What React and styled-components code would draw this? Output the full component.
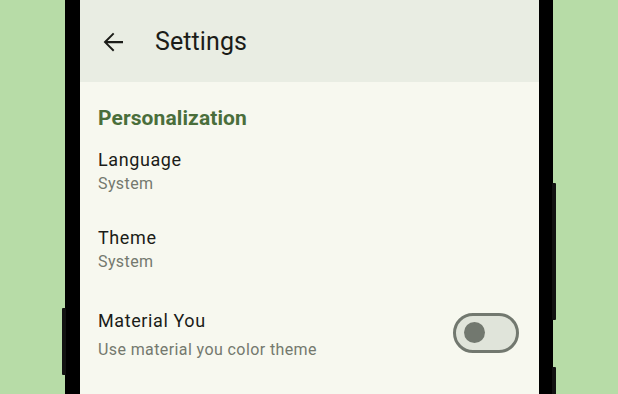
import React from "react";
import styled, { createGlobalStyle } from "styled-components";

const Global = createGlobalStyle`
  html, body { margin: 0; padding: 0; }
  body {
    background: #b7dca7;
    font-family: Roboto, "Noto Sans", Arial, sans-serif;
    overflow: hidden;
  }
`;

const Page = styled.div`
  height: 394px;
  display: flex;
  align-items: stretch;
  padding-left: 65px;
  overflow: hidden;
`;

const Phone = styled.div`
  position: relative;
  width: 459px;
  height: 394px;
  background: #000;
  padding: 0 14px 0 15px;
  display: flex;
`;

const SideButton = styled.div`
  position: absolute;
  top: ${(p) => p.$top}px;
  height: ${(p) => p.$h}px;
  width: 4px;
  background: #111;
  border-radius: 1px;
  ${(p) => (p.$side === "left" ? "left: -3px;" : "right: -3px;")}
`;

const Screen = styled.div`
  flex: 1;
  background: #f7f8ef;
  display: flex;
  flex-direction: column;
`;

const TopBar = styled.header`
  height: 82px;
  background: #e9ede3;
  display: flex;
  align-items: center;
  padding-left: 18px;
`;

const BackButton = styled.button`
  border: 0;
  background: none;
  padding: 0;
  width: 30px;
  height: 30px;
  display: flex;
  color: #1b1c18;
  margin-right: 27px;
  margin-top: 1px;
`;

const Title = styled.h1`
  margin: 0;
  font-size: 25px;
  line-height: 25px;
  font-weight: 400;
  color: #1b1c18;
  letter-spacing: 0.1px;
`;

const Content = styled.main`
  padding: 24px 18px 0 18px;
  display: flex;
  flex-direction: column;
`;

const SectionHeading = styled.h2`
  margin: 0 0 2.5px;
  font-size: 21px;
  line-height: 24px;
  font-weight: 700;
  color: #4a6e3b;
  letter-spacing: 0.1px;
`;

const Row = styled.div`
  display: flex;
  align-items: center;
  justify-content: space-between;
  padding: ${(p) => (p.$extra ? "21.5px 0 16.5px" : "16.5px 0")};
`;

const TextBlock = styled.div`
  display: flex;
  flex-direction: column;
`;

const ItemTitle = styled.div`
  font-size: 18px;
  line-height: 22px;
  color: #1b1c18;
  letter-spacing: 0.6px;
`;

const ItemSub = styled.div`
  font-size: 16px;
  line-height: 20px;
  color: #74796e;
  letter-spacing: 0.4px;
  margin-top: ${(p) => p.$gap ?? 3}px;
`;

const Switch = styled.div`
  width: 66px;
  height: 40px;
  box-sizing: border-box;
  border: 3px solid #72786f;
  border-radius: 20px;
  background: #e0e4da;
  display: flex;
  align-items: center;
  padding-left: 8px;
  margin-right: 2px;
  margin-top: -4.5px;
`;

const Thumb = styled.div`
  width: 21px;
  height: 21px;
  border-radius: 50%;
  background: #72786f;
`;

function Item({ title, sub, gap, extra, children }) {
  return (
    <Row $extra={extra}>
      <TextBlock>
        <ItemTitle>{title}</ItemTitle>
        <ItemSub $gap={gap}>{sub}</ItemSub>
      </TextBlock>
      {children}
    </Row>
  );
}

export default function App() {
  return (
    <>
      <Global />
      <Page>
        <Phone>
          <SideButton $side="left" $top={308} $h={67} />
          <SideButton $side="right" $top={183} $h={137} />
          <SideButton $side="right" $top={367} $h={60} />
          <Screen>
            <TopBar>
              <BackButton aria-label="Back">
                <svg width="30" height="30" viewBox="0 0 24 24">
                  <path
                    fill="currentColor"
                    d="M20 11.1H7.6l5.5-5.5L12 4.5 4.5 12l7.5 7.5 1.1-1.1-5.5-5.5H20z"
                  />
                </svg>
              </BackButton>
              <Title>Settings</Title>
            </TopBar>
            <Content>
              <SectionHeading>Personalization</SectionHeading>
              <Item title="Language" sub="System" />
              <Item title="Theme" sub="System" />
              <Item title="Material You" sub="Use material you color theme" gap={7.5} extra>
                <Switch>
                  <Thumb />
                </Switch>
              </Item>
            </Content>
          </Screen>
        </Phone>
      </Page>
    </>
  );
}
